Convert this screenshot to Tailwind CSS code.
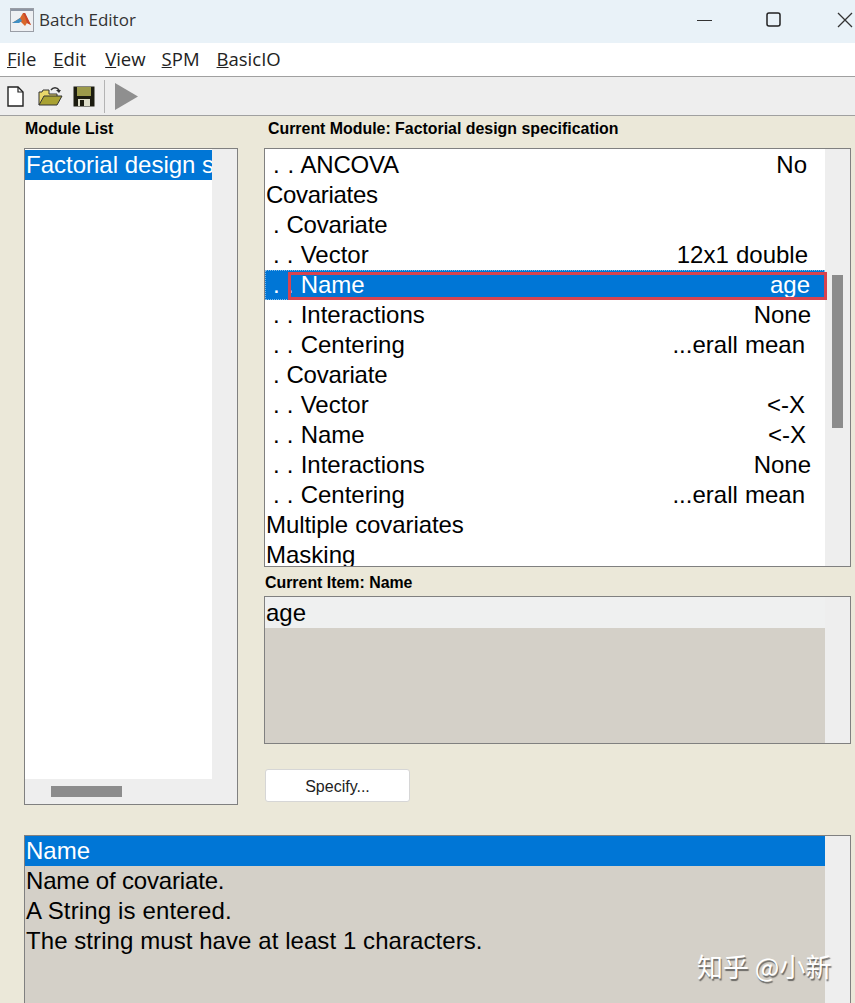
<!DOCTYPE html>
<html lang="en">
<head>
    <meta charset="UTF-8">
    <title>Batch Editor</title>
    <script src="https://cdn.jsdelivr.net/npm/@tailwindcss/browser@4"></script>
</head>
<body class="w-[855px] h-[1003px] overflow-hidden bg-[#ebe8d9] text-black font-['Liberation_Sans',Arial,sans-serif]">
    <div class="relative h-[1003px] overflow-hidden">
        <!-- title bar -->
        <header class="h-[43px] bg-[#e9f2f8] flex items-center pl-[10px] pb-[3px]">
            <svg width="24" height="24" viewBox="0 0 24 24">
                <rect x="0.5" y="0.5" width="23" height="23" fill="#eef0f3" stroke="#9a9ea6"/>
                <rect x="1" y="1" width="22" height="2" fill="#8d95a3"/>
                <path d="M2 15l5-3 3-2 3-5 2 0 6 12-4-2-2 3-4-4-3 0z" fill="#d9662a"/>
                <path d="M2 15l5-3 3-2 2 3-3 2-2 0z" fill="#3f8fc4"/>
                <path d="M13 5l2 0 6 12-4-2-2-6z" fill="#c8452a"/>
            </svg>
            <span class="ml-[5px] text-[17px] text-[#333] font-['Open_Sans',sans-serif]">Batch Editor</span>
            <div class="ml-auto flex items-center">
                <svg width="16" height="16" viewBox="0 0 16 16" class="mr-[53px]"><path d="M0 8.5h15" stroke="#333" stroke-width="1"/></svg>
                <svg width="16" height="16" viewBox="0 0 16 16" class="mr-[55px]"><rect x="1" y="1" width="13" height="13" rx="2" fill="none" stroke="#222" stroke-width="1.5"/></svg>
                <svg width="16" height="16" viewBox="0 0 16 16" class="mr-[2px]"><path d="M1 1l14 14M15 1L1 15" stroke="#333" stroke-width="1.3"/></svg>
            </div>
        </header>

        <!-- menu -->
        <nav class="h-[34px] bg-white border-b border-[#a0a0a0] flex items-center pl-[7px] gap-[17px] text-[18.5px] text-[#222] font-['Open_Sans',sans-serif] leading-none pb-px">
            <span><u>F</u>ile</span>
            <span><u>E</u>dit</span>
            <span class="ml-[2px]"><u>V</u>iew</span>
            <span class="-ml-px"><u>S</u>PM</span>
            <span><u>B</u>asicIO</span>
        </nav>

        <!-- toolbar -->
        <div class="h-[39px] bg-[#eeeeee] border-b border-[#a0a0a0] flex items-center pl-[7px]">
            <svg width="17" height="21" viewBox="0 0 17 21"><path d="M1 1h10l5 5v14H1z" fill="#fff" stroke="#222" stroke-width="1.4"/><path d="M11 1v5h5" fill="none" stroke="#222" stroke-width="1.2"/></svg>
            <svg width="25" height="20" viewBox="0 0 25 20" class="ml-[14px]">
                <path d="M1 19V6h3l1-2h6v4h8v2" fill="#e8d66a" stroke="#333" stroke-width="1"/>
                <path d="M1 19l5-9h18l-5 9z" fill="#a9a233" stroke="#333" stroke-width="1"/>
                <path d="M13 4c2-3 6-3 8 0" fill="none" stroke="#333" stroke-width="1.4"/>
                <path d="M18 4h5l-2 3z" fill="#333"/>
            </svg>
            <svg width="22" height="21" viewBox="0 0 22 21" class="ml-[10px]">
                <rect x="0.5" y="0.5" width="21" height="20" fill="#1c1c10"/>
                <rect x="4" y="1" width="14" height="9" fill="#9c9a4a"/>
                <rect x="5" y="13" width="12" height="7" fill="#dcdcc8"/>
                <rect x="7" y="14" width="4" height="6" fill="#1c1c10"/>
            </svg>
            <div class="ml-[9px] w-px h-[33px] bg-[#b4b4b4]"></div>
            <svg width="23" height="27" viewBox="0 0 23 27" class="ml-[10px]"><path d="M0 0l23 13.5L0 27z" fill="#8f8f8f"/></svg>
        </div>

        <!-- main -->
        <main class="pl-[24px] flex gap-[26px]">
            <section class="w-[214px]">
                <h2 class="h-[32px] pl-px pt-[3px] text-[15.9px] leading-[20px] font-bold">Module List</h2>
                <div class="h-[657px] border border-[#808080] bg-[#eeeeee] flex flex-col">
                    <div class="h-[630px] w-[187px] bg-white overflow-hidden">
                        <div class="mt-px h-[30px] bg-[#0076d6] text-white text-[24px] leading-[30px] pl-px whitespace-nowrap overflow-hidden">Factorial design specification</div>
                    </div>
                    <div class="mt-[7px] ml-[26px] w-[71px] h-[11px] bg-[#8c8c8c]"></div>
                </div>
            </section>

            <section class="w-[587px]">
                <h2 class="h-[32px] pl-[4px] pt-[3px] text-[15.9px] leading-[20px] font-bold">Current Module: Factorial design specification</h2>
                <div class="relative h-[419px] border border-[#808080] bg-[#eeeeee] overflow-hidden">
                    <ul class="w-[560px] h-[417px] bg-white pt-px text-[24px] leading-[30px] overflow-hidden [word-spacing:0.5px]">
                        <li class="flex justify-between pl-[8px] pr-[18px]"><span class="[word-spacing:1.5px] tracking-[-0.2px]">. . ANCOVA</span><span>No</span></li>
                        <li class="pl-px tracking-[-0.3px]">Covariates</li>
                        <li class="pl-[8px] tracking-[-0.2px]">. Covariate</li>
                        <li class="flex justify-between pl-[8px] pr-[17px]"><span>. . Vector</span><span>12x1 double</span></li>
                        <li class="flex justify-between pl-[8px] pr-[15px] bg-[#0076d6] text-white outline outline-dotted outline-white/50 -outline-offset-1"><span>. . Name</span><span>age</span></li>
                        <li class="flex justify-between pl-[8px] pr-[14px]"><span>. . Interactions</span><span>None</span></li>
                        <li class="flex justify-between pl-[8px] pr-[20px]"><span>. . Centering</span><span>...erall mean</span></li>
                        <li class="pl-[8px] tracking-[-0.2px]">. Covariate</li>
                        <li class="flex justify-between pl-[8px] pr-[20px]"><span>. . Vector</span><span>&lt;-X</span></li>
                        <li class="flex justify-between pl-[8px] pr-[19px]"><span>. . Name</span><span>&lt;-X</span></li>
                        <li class="flex justify-between pl-[8px] pr-[14px]"><span>. . Interactions</span><span>None</span></li>
                        <li class="flex justify-between pl-[8px] pr-[20px]"><span>. . Centering</span><span>...erall mean</span></li>
                        <li class="pl-px tracking-[-0.08px]">Multiple covariates</li>
                        <li class="pl-px">Masking</li>
                    </ul>
                    <div class="absolute left-[567px] top-[126px] w-[11px] h-[153px] bg-[#8c8c8c]"></div>
                </div>

                <h2 class="h-[29px] pl-px pt-[6px] text-[15.9px] leading-[20px] font-bold">Current Item: Name</h2>
                <div class="h-[148px] border border-[#808080] bg-[#eeeeee]">
                    <div class="w-[560px] h-full bg-[#d4d0c8]">
                        <div class="pt-px h-[31px] bg-[#eff0f0] pl-px text-[24px] leading-[30px]">age</div>
                    </div>
                </div>

                <button class="block mt-[25px] ml-px w-[145px] h-[33px] pt-[2px] rounded-[3px] bg-white border border-[#d6d6d6] text-[16px] text-[#222]">Specify...</button>
            </section>
        </main>

        <!-- help text -->
        <section class="mt-[30px] ml-[24px] w-[827px] h-[180px] border border-[#808080] bg-[#eeeeee]">
            <div class="w-[800px] h-full bg-[#d4d0c8] text-[24px] leading-[30px]">
                <div class="bg-[#0076d6] text-white pl-px">Name</div>
                <p class="pl-px tracking-[-0.17px]">Name of covariate.</p>
                <p class="pl-px tracking-[0.15px]">A String is entered.</p>
                <p class="pl-px tracking-[0.07px]">The string must have at least 1 characters.</p>
            </div>
        </section>

        <!-- annotation and watermark sit over the content -->
        <div class="absolute left-[288px] top-[272px] w-[539px] h-[28px] border-[3px] border-[#d8434f]"></div>
        <div class="absolute left-[697px] top-[948px] text-[26px] leading-[36px] text-white whitespace-nowrap font-['Noto_Sans_CJK_SC',sans-serif] [text-shadow:1px_2px_1px_rgba(0,0,0,0.5)]">知乎 @小新</div>
    </div>
</body>
</html>
